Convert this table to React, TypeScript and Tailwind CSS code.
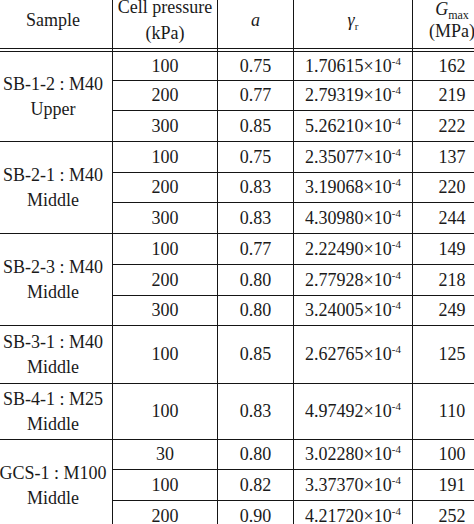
import React from 'react'

type Row = { p: string; a: string; g: string; gmax: string }
type Group = { name: string; pos: string; span: string; rows: Row[] }

const groups: Group[] = [
  {
    name: 'SB-1-2 : M40',
    pos: 'Upper',
    span: 'row-span-3',
    rows: [
      { p: '100', a: '0.75', g: '1.70615', gmax: '162' },
      { p: '200', a: '0.77', g: '2.79319', gmax: '219' },
      { p: '300', a: '0.85', g: '5.26210', gmax: '222' },
    ],
  },
  {
    name: 'SB-2-1 : M40',
    pos: 'Middle',
    span: 'row-span-3',
    rows: [
      { p: '100', a: '0.75', g: '2.35077', gmax: '137' },
      { p: '200', a: '0.83', g: '3.19068', gmax: '220' },
      { p: '300', a: '0.83', g: '4.30980', gmax: '244' },
    ],
  },
  {
    name: 'SB-2-3 : M40',
    pos: 'Middle',
    span: 'row-span-3',
    rows: [
      { p: '100', a: '0.77', g: '2.22490', gmax: '149' },
      { p: '200', a: '0.80', g: '2.77928', gmax: '218' },
      { p: '300', a: '0.80', g: '3.24005', gmax: '249' },
    ],
  },
  {
    name: 'SB-3-1 : M40',
    pos: 'Middle',
    span: 'row-span-1',
    rows: [{ p: '100', a: '0.85', g: '2.62765', gmax: '125' }],
  },
  {
    name: 'SB-4-1 : M25',
    pos: 'Middle',
    span: 'row-span-1',
    rows: [{ p: '100', a: '0.83', g: '4.97492', gmax: '110' }],
  },
  {
    name: 'GCS-1 : M100',
    pos: 'Middle',
    span: 'row-span-3',
    rows: [
      { p: '30', a: '0.80', g: '3.02280', gmax: '100' },
      { p: '100', a: '0.82', g: '3.37370', gmax: '191' },
      { p: '200', a: '0.90', g: '4.21720', gmax: '252' },
    ],
  },
]

const line = 'border-[#151515]'
const cell = `flex flex-col items-center justify-center border-b border-r ${line}`
// last column runs past the right edge, so it has no right rule
const lastCell = `flex flex-col items-center justify-center border-b ${line}`

function Strain({ value }: { value: string }) {
  return (
    <span className="whitespace-nowrap">
      {value}×10
      <span className="relative -top-[7px] text-[11px] leading-none">-4</span>
    </span>
  )
}

export default function App() {
  return (
    <div className="h-[524px] w-[474px] overflow-hidden bg-white font-['Liberation_Serif',serif] text-[18px] leading-[25px] text-[#1a1a1a]">
      <div className="grid w-max grid-cols-[113px_105px_76px_119px_78px] grid-rows-[49px_3px_29px_30px_31px_31px_30px_31px_31px_31px_30px_58px_56px_30px_31px_31px]">
        {/* header: two-line labels spill over the top edge */}
        <div className={`${cell} pb-2 pr-[6px]`}>Sample</div>
        <div className={`${cell} pb-2 leading-[26px]`}>
          <div className="whitespace-nowrap">Cell pressure</div>
          <div>(kPa)</div>
        </div>
        <div className={`${cell} pb-2 italic`}>a</div>
        <div className={`${cell} pb-2`}>
          <div className="whitespace-nowrap">
            <span className="italic">γ</span>
            <span className="relative top-[4px] text-[11px] leading-none">r</span>
          </div>
        </div>
        <div className={`${lastCell} pb-2 leading-[22px]`}>
          <div className="whitespace-nowrap">
            <span className="italic">G</span>
            <span className="relative top-[4px] text-[12px] leading-none">max</span>
          </div>
          <div className="whitespace-nowrap">(MPa)</div>
        </div>

        {/* double rule under the header */}
        <div className={`border-b border-r ${line}`} />
        <div className={`border-b border-r ${line}`} />
        <div className={`border-b border-r ${line}`} />
        <div className={`border-b border-r ${line}`} />
        <div className={`border-b ${line}`} />

        {groups.map((grp) => (
          <React.Fragment key={grp.name}>
            {grp.rows.map((r, i) => (
              <React.Fragment key={r.p}>
                {i === 0 && (
                  <div className={`${cell} ${grp.span} pr-[6px]`}>
                    <div className="whitespace-nowrap">{grp.name}</div>
                    <div>{grp.pos}</div>
                  </div>
                )}
                <div className={cell}>{r.p}</div>
                <div className={cell}>{r.a}</div>
                <div className={cell}>
                  <Strain value={r.g} />
                </div>
                <div className={lastCell}>{r.gmax}</div>
              </React.Fragment>
            ))}
          </React.Fragment>
        ))}
      </div>
    </div>
  )
}
